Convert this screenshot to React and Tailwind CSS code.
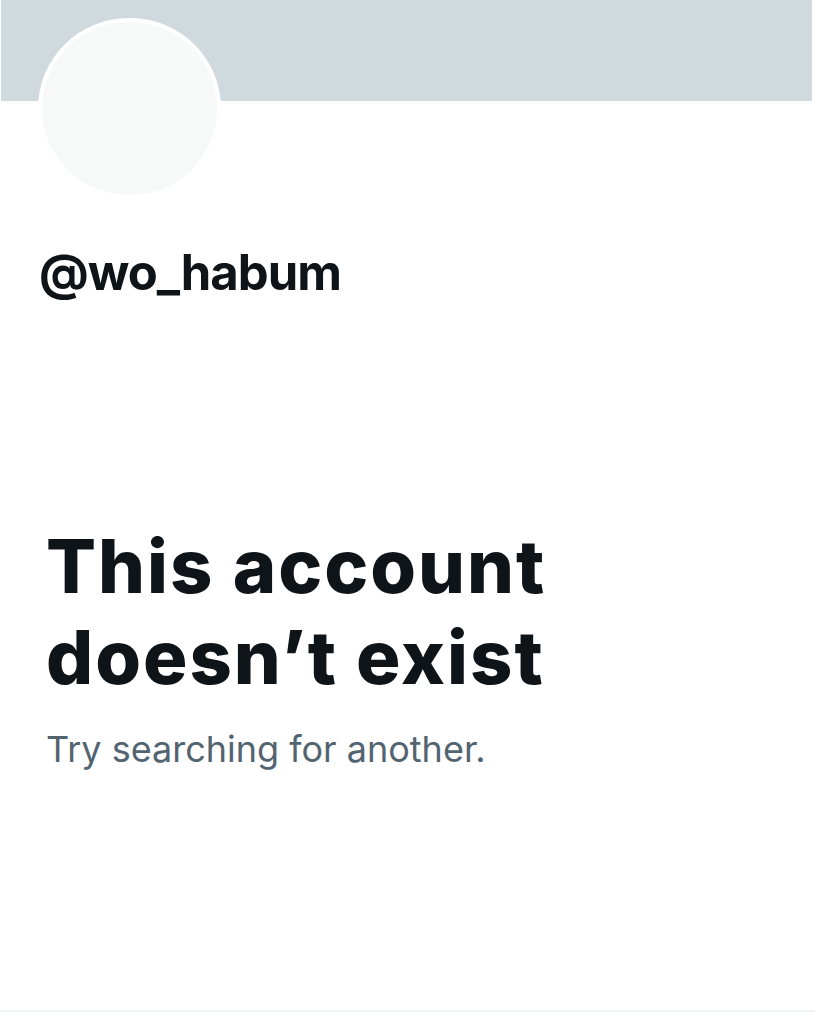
export default function App() {
  return (
    <div className="relative w-[815px] h-[1024px] bg-white overflow-hidden" style={{ fontFamily: 'Inter, "Liberation Sans", Arial, sans-serif' }}>
      <div className="ml-px mr-[3px] h-[101px] bg-[#cfd9de]" />
      <div className="absolute left-[38px] top-[18px] w-[183px] h-[181px] rounded-full bg-white p-[4px]">
        <div className="w-full h-full rounded-full bg-[#f7f9f9]" />
      </div>

      <div className="pl-[39px] pt-[142px]">
        <div className="text-[49px] leading-[60px] font-bold text-[#0f1419] tracking-[-1px]">@wo_habum</div>
      </div>

      <div className="pl-[46px] pt-[218px]">
        <h1 className="text-[74px] leading-[91px] font-extrabold text-[#0f1419] tracking-[2px]">
          This account
          <br />
          doesn’t exist
        </h1>
        <p className="mt-[24px] text-[36px] leading-[44px] text-[#536471]">Try searching for another.</p>
      </div>

      <div className="absolute left-0 right-0 top-[1010px] h-[2px] bg-[#eff3f4]" />
    </div>
  )
}
